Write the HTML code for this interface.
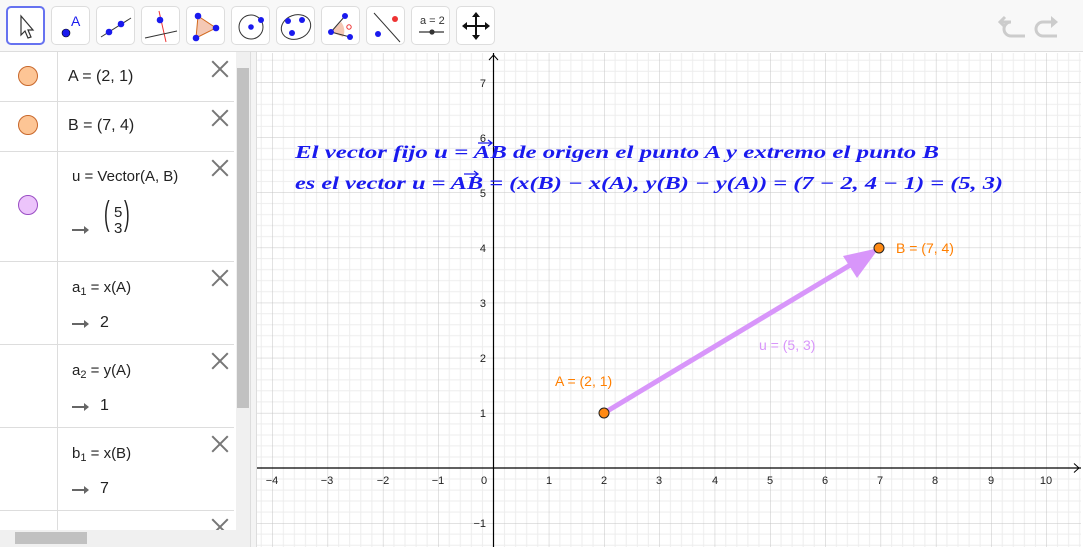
<!DOCTYPE html>
<html><head><meta charset="utf-8"><style>
*{margin:0;padding:0;box-sizing:border-box}
body{width:1083px;height:547px;overflow:hidden;background:#fff;font-family:"Liberation Sans",sans-serif;position:relative}
#tb{position:absolute;left:0;top:0;width:1083px;height:52px;background:#f8f8f8;border-bottom:1px solid #ddd}
.btn{position:absolute;top:6px;width:39px;height:39px;border:1px solid #ddd;border-radius:5px;background:#fff}
.btn svg{position:absolute;left:0;top:0}
#alg{position:absolute;left:0;top:52px;width:250px;height:495px;background:#fff;overflow:hidden}
.row{position:absolute;left:0;width:234px;border-bottom:1px solid #ddd}
.row .l{position:absolute;left:57px;top:0;bottom:0;border-left:1px solid #ddd}
.dot{position:absolute;left:18px;width:20px;height:20px;border-radius:50%}
.x{position:absolute;left:211px;width:18px;height:18px}
.x:before,.x:after{content:"";position:absolute;left:-2px;top:8px;width:22px;height:2px;background:#777;transform:rotate(45deg)}
.x:after{transform:rotate(-45deg)}
.t{position:absolute;left:68px;font-size:16px;color:#222;white-space:nowrap}
.ar{position:absolute;left:72px;width:16px;height:2px;background:#666}
.ar:after{content:"";position:absolute;right:-1px;top:-3px;border-left:5px solid #666;border-top:4px solid transparent;border-bottom:4px solid transparent}
sub{font-size:11px;vertical-align:-3px}
</style></head><body>
<div id="tb">
<div class="btn" style="left:6px;border:2px solid #6672f0"><svg width="39" height="39"><path d="M13 8 L13 27 L17 23 L20 30 L23 29 L20 22 L25 22 Z" fill="#fff" stroke="#333" stroke-width="1.2"/></svg></div>
<div class="btn" style="left:51px"><svg width="39" height="39"><circle cx="14" cy="26" r="4" fill="#1a1aee" stroke="#000" stroke-width=".6"/><text x="19" y="19" font-size="14" fill="#1a1aee" font-family="Liberation Sans">A</text></svg></div>
<div class="btn" style="left:96px"><svg width="39" height="39"><line x1="4" y1="30" x2="34" y2="11" stroke="#333"/><circle cx="12" cy="25" r="3.3" fill="#1a1aee"/><circle cx="24" cy="17" r="3.3" fill="#1a1aee"/></svg></div>
<div class="btn" style="left:141px"><svg width="39" height="39"><line x1="17" y1="4" x2="24" y2="35" stroke="#e33"/><line x1="3" y1="31" x2="35" y2="24" stroke="#333"/><circle cx="18" cy="13" r="3.3" fill="#1a1aee"/></svg></div>
<div class="btn" style="left:186px"><svg width="39" height="39"><path d="M11 9 L29 21 L9 31 Z" fill="#f4c8b4" stroke="#d2691e"/><circle cx="11" cy="9" r="3.3" fill="#1a1aee"/><circle cx="29" cy="21" r="3.3" fill="#1a1aee"/><circle cx="9" cy="31" r="3.3" fill="#1a1aee"/></svg></div>
<div class="btn" style="left:231px"><svg width="39" height="39"><circle cx="19" cy="20" r="12" fill="none" stroke="#333"/><circle cx="19" cy="20" r="2.8" fill="#1a1aee"/><circle cx="29" cy="13" r="3" fill="#1a1aee"/></svg></div>
<div class="btn" style="left:276px"><svg width="39" height="39"><ellipse cx="19" cy="20" rx="15" ry="12" fill="none" stroke="#333" transform="rotate(-20 19 20)"/><circle cx="11" cy="14" r="3" fill="#1a1aee"/><circle cx="25" cy="13" r="3" fill="#1a1aee"/><circle cx="15" cy="26" r="3" fill="#1a1aee"/></svg></div>
<div class="btn" style="left:321px"><svg width="39" height="39"><path d="M9 25 L19 15 A14 14 0 0 1 21 30 Z" fill="#f4c8b4"/><line x1="9" y1="25" x2="23" y2="9" stroke="#333"/><line x1="9" y1="25" x2="28" y2="30" stroke="#333"/><circle cx="9" cy="25" r="3" fill="#1a1aee"/><circle cx="23" cy="9" r="3" fill="#1a1aee"/><circle cx="28" cy="30" r="3" fill="#1a1aee"/><circle cx="27" cy="20" r="2.2" fill="none" stroke="#e33"/></svg></div>
<div class="btn" style="left:366px"><svg width="39" height="39"><line x1="7" y1="6" x2="33" y2="35" stroke="#333"/><circle cx="28" cy="12" r="3" fill="#e33"/><circle cx="11" cy="27" r="3" fill="#1a1aee"/></svg></div>
<div class="btn" style="left:411px"><svg width="39" height="39"><text x="8" y="17" font-size="11" fill="#333" font-family="Liberation Sans">a = 2</text><line x1="7" y1="25" x2="32" y2="25" stroke="#555" stroke-width="1.5"/><circle cx="20" cy="25" r="2.6" fill="#333"/></svg></div>
<div class="btn" style="left:456px"><svg width="39" height="39"><path d="M19 7 V31 M7 19 H31" stroke="#111" stroke-width="2"/><path d="M19 5 L15 10 H23 Z M19 33 L15 28 H23 Z M5 19 L10 15 V23 Z M33 19 L28 15 V23 Z" fill="#111"/></svg></div>
<svg style="position:absolute;left:995px;top:12px" width="70" height="28"><path d="M30 24 H16 A7 7 0 0 1 16 10 H5 M10 5 L5 10 L10 15" fill="none" stroke="#ccc" stroke-width="3"/><path d="M62 24 H48 A7 7 0 0 1 48 10 H58" fill="none" stroke="#ccc" stroke-width="3"/><path d="M56 4 L63 10 L56 16 Z" fill="#ccc"/></svg>
</div>

<div id="alg">
<div class="row" style="top:0;height:50px"><div class="l"></div><div class="dot" style="top:14px;background:#fdc595;border:1px solid #c8682c"></div><div class="t" style="top:16px">A = (2, 1)</div><div class="x" style="top:8px"></div></div>
<div class="row" style="top:50px;height:50px"><div class="l"></div><div class="dot" style="top:13px;background:#fdc595;border:1px solid #c8682c"></div><div class="t" style="top:15px">B = (7, 4)</div><div class="x" style="top:7px"></div></div>
<div class="row" style="top:100px;height:110px"><div class="l"></div><div class="dot" style="top:43px;background:#ecc4fb;border:1px solid #9a4dc4"></div><div class="t" style="top:16px;left:72px;font-size:15px">u = Vector(A, B)</div><div class="ar" style="top:77px"></div><div class="t" style="top:52px;left:104px;font-size:15px;line-height:16px"><span style="position:absolute;left:0;top:2px;font-size:34px;font-weight:100;transform:scaleX(.5);transform-origin:left">(</span><span style="position:absolute;left:10px;top:1px">5<br>3</span><span style="position:absolute;left:20px;top:2px;font-size:34px;font-weight:100;transform:scaleX(.5);transform-origin:left">)</span></div><div class="x" style="top:7px"></div></div>
<div class="row" style="top:210px;height:83px"><div class="l"></div><div class="t" style="top:17px;left:72px;font-size:15px">a<sub>1</sub> = x(A)</div><div class="ar" style="top:61px"></div><div class="t" style="top:52px;left:100px">2</div><div class="x" style="top:7px"></div></div>
<div class="row" style="top:293px;height:83px"><div class="l"></div><div class="t" style="top:17px;left:72px;font-size:15px">a<sub>2</sub> = y(A)</div><div class="ar" style="top:61px"></div><div class="t" style="top:52px;left:100px">1</div><div class="x" style="top:7px"></div></div>
<div class="row" style="top:376px;height:83px"><div class="l"></div><div class="t" style="top:17px;left:72px;font-size:15px">b<sub>1</sub> = x(B)</div><div class="ar" style="top:61px"></div><div class="t" style="top:52px;left:100px">7</div><div class="x" style="top:7px"></div></div>
<div class="row" style="top:459px;height:40px;border:none"><div class="l"></div><div class="x" style="top:7px"></div></div>
<div style="position:absolute;left:236px;top:0;width:14px;height:478px;background:#f0f0f0"></div>
<div style="position:absolute;left:237px;top:16px;width:12px;height:340px;background:#c1c1c1"></div>
<div style="position:absolute;left:0;top:478px;width:250px;height:17px;background:#f0f0f0"></div>
<div style="position:absolute;left:15px;top:480px;width:72px;height:12px;background:#c1c1c1"></div>
</div>
<div style="position:absolute;left:250px;top:52px;width:7px;height:495px;background:#f4f4f4;border-left:1px solid #ddd;border-right:1px solid #ddd"></div>

<svg style="position:absolute;left:257px;top:53px" width="826" height="494" viewBox="257 53 826 494">
<defs>
<pattern id="g" patternUnits="userSpaceOnUse" x="493.5" y="468" width="55.3" height="55.1">
<path d="M11.06 0V55.1M22.12 0V55.1M33.18 0V55.1M44.24 0V55.1M0 11.02H55.3M0 22.04H55.3M0 33.06H55.3M0 44.08H55.3" stroke="#ededed" stroke-width="1"/>
<path d="M0 0V55.1M0 0H55.3" stroke="#c4c4c4" stroke-width="1"/>
</pattern>
</defs>
<rect x="257" y="53" width="824" height="494" fill="url(#g)"/>
<line x1="493.5" y1="53" x2="493.5" y2="547" stroke="#000" stroke-width="1.2"/>
<line x1="257" y1="468" x2="1081" y2="468" stroke="#000" stroke-width="1.2"/>
<path d="M489 60 L493.5 55 L498 60 M1074 463.5 L1079 468 L1074 472.5" fill="none" stroke="#000"/>
<g font-size="11" fill="#222" font-family="Liberation Sans" text-anchor="middle">
<text x="272" y="484">−4</text><text x="327" y="484">−3</text><text x="383" y="484">−2</text><text x="438" y="484">−1</text><text x="484" y="484">0</text>
<text x="549" y="484">1</text><text x="604" y="484">2</text><text x="659" y="484">3</text><text x="715" y="484">4</text><text x="770" y="484">5</text><text x="825" y="484">6</text><text x="880" y="484">7</text><text x="935" y="484">8</text><text x="991" y="484">9</text><text x="1046" y="484">10</text>
</g>
<g font-size="11" fill="#222" font-family="Liberation Sans" text-anchor="end">
<text x="486" y="87">7</text><text x="486" y="142">6</text><text x="486" y="197">5</text><text x="486" y="252">4</text><text x="486" y="307">3</text><text x="486" y="362">2</text><text x="486" y="417">1</text><text x="486" y="527">−1</text>
</g>
<line x1="604" y1="413" x2="852" y2="264" stroke="#d896fa" stroke-width="5"/>
<path d="M879 248 L843 256 L857 278 Z" fill="#d896fa"/>
<circle cx="604" cy="413" r="5" fill="#ff8a14" stroke="#222" stroke-width="1"/>
<circle cx="879" cy="248" r="5" fill="#ff8a14" stroke="#222" stroke-width="1"/>
<g font-size="14" font-family="Liberation Sans">
<text x="555" y="386" fill="#ff7f00">A = (2, 1)</text>
<text x="896" y="253" fill="#ff7f00">B = (7, 4)</text>
<text x="759" y="350" fill="#d896fa">u = (5, 3)</text>
</g>
<g font-family="Liberation Serif,serif" font-style="italic" font-weight="bold" font-size="17.5" fill="#1a1aee">
<text x="295" y="158" textLength="644" lengthAdjust="spacingAndGlyphs">El vector fijo u = AB de origen el punto A y extremo el punto B</text>
<text x="295" y="189" textLength="708" lengthAdjust="spacingAndGlyphs">es el vector u = AB  = (x(B) − x(A), y(B) − y(A)) = (7 − 2, 4 − 1) = (5, 3)</text>
</g>
<path d="M478 143 H491 M488 140 L492 143 L488 146 M464 174 H477 M474 171 L478 174 L474 177" stroke="#1a1aee" stroke-width="1.3" fill="none"/>
</svg>
</body></html>
